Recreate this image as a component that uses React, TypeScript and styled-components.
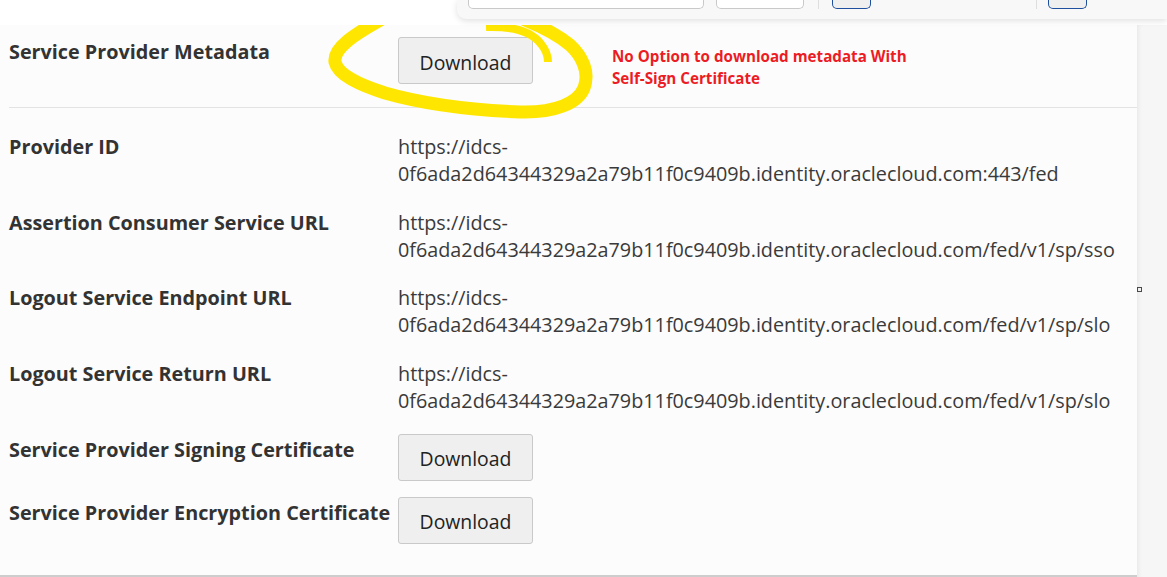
import React from 'react'
import styled, { createGlobalStyle } from 'styled-components'

const GlobalStyle = createGlobalStyle`
  html, body { margin: 0; padding: 0; background: #fff; }
  body { font-family: "Open Sans", "Noto Sans", sans-serif; color: #333; }
`

const Page = styled.div`
  width: 1167px;
  height: 577px;
  overflow: hidden;
  display: flex;
  flex-direction: column;
`

const Header = styled.header`
  position: relative;
  z-index: 3;
  height: 25px;
  flex: none;
  background: #fff;
`

const Toolbar = styled.div`
  position: absolute;
  top: 0;
  right: 0;
  left: 457px;
  height: 19px;
  display: flex;
  align-items: flex-start;
  background: #f8f8f8;
  border-bottom-left-radius: 9px;
  box-shadow: 0 2px 6px rgba(0, 0, 0, 0.12);
`

const ToolInput = styled.div<{ $w: number; $ml: number }>`
  width: ${p => p.$w}px;
  margin-left: ${p => p.$ml}px;
  height: 9px;
  box-sizing: border-box;
  background: #fff;
  border: 1px solid #c9c9c9;
  border-top: none;
  border-radius: 0 0 5px 5px;
`

const ToolSep = styled.div<{ $ml: number }>`
  width: 1px;
  height: 9px;
  margin-left: ${p => p.$ml}px;
  background: #dedede;
`

const ToolButton = styled.div<{ $ml: number }>`
  width: 39px;
  height: 9px;
  margin-left: ${p => p.$ml}px;
  box-sizing: border-box;
  background: #efefef;
  border: 1px solid #1d4f9e;
  border-top: none;
  border-radius: 0 0 5px 5px;
`

const Body = styled.div`
  flex: 1;
  display: grid;
  grid-template-columns: 1137px 30px;
`

const Panel = styled.main`
  position: relative;
  background: #fcfcfc;
  padding-left: 9px;
  border-bottom: 2px solid #cdcdcd;
`

const Gutter = styled.aside`
  background: #f6f6f6;
  box-shadow: inset 5px 0 5px -4px rgba(0, 0, 0, 0.07);
  display: flex;
  flex-direction: column;
`

const Handle = styled.span`
  width: 5px;
  height: 5px;
  margin-top: 262px;
  box-sizing: border-box;
  border: 1.5px solid #4a4a4a;
`

const MetaRow = styled.section`
  display: grid;
  grid-template-columns: 389px 1fr;
  align-items: start;
  padding: 12px 0 23px;
  border-bottom: 1px solid #e3e3e3;
`

const List = styled.div`
  padding-top: 25px;
`

const Row = styled.div<{ $space: number }>`
  display: grid;
  grid-template-columns: 389px 1fr;
  align-items: start;
  margin-bottom: ${p => p.$space}px;
`

const Label = styled.div<{ $top?: number }>`
  font-weight: 700;
  font-size: 19.8px;
  line-height: 27px;
  color: #333;
  padding-top: ${p => p.$top ?? 0}px;
  white-space: nowrap;
`

const Value = styled.div`
  font-weight: 400;
  font-size: 19.8px;
  line-height: 27px;
  color: #3a3a3a;
  max-width: 730px;
`

const DownloadButton = styled.button`
  width: 135px;
  height: 47px;
  padding: 3px 0 0;
  box-sizing: border-box;
  background: #efefef;
  border: 1px solid #c9c9c9;
  border-radius: 3px;
  font-family: "Open Sans", "Noto Sans", sans-serif;
  font-size: 19.4px;
  font-weight: 400;
  color: #222;
`

const Note = styled.p`
  position: absolute;
  left: 612px;
  top: 20px;
  margin: 0;
  font-size: 15.2px;
  line-height: 22px;
  font-weight: 700;
  color: #ec1c24;
  z-index: 2;
`

const Scribble = styled.svg`
  position: absolute;
  left: 320px;
  top: -30px;
  width: 290px;
  height: 160px;
  pointer-events: none;
  z-index: 1;
`

const urls = [
  { label: 'Provider ID', value: 'https://idcs-0f6ada2d64344329a2a79b11f0c9409b.identity.oraclecloud.com:443/fed', space: 21.5 },
  { label: 'Assertion Consumer Service URL', value: 'https://idcs-0f6ada2d64344329a2a79b11f0c9409b.identity.oraclecloud.com/fed/v1/sp/sso', space: 21.5 },
  { label: 'Logout Service Endpoint URL', value: 'https://idcs-0f6ada2d64344329a2a79b11f0c9409b.identity.oraclecloud.com/fed/v1/sp/slo', space: 21.5 },
  { label: 'Logout Service Return URL', value: 'https://idcs-0f6ada2d64344329a2a79b11f0c9409b.identity.oraclecloud.com/fed/v1/sp/slo', space: 20 },
]

const certs = [
  { label: 'Service Provider Signing Certificate', space: 16 },
  { label: 'Service Provider Encryption Certificate', space: 0 },
]

export default function App() {
  return (
    <Page>
      <GlobalStyle />
      <Header>
        <Toolbar>
          <ToolInput $w={236} $ml={11} />
          <ToolInput $w={88} $ml={12} />
          <ToolSep $ml={14} />
          <ToolButton $ml={13} />
          <ToolSep $ml={165} />
          <ToolButton $ml={11} />
        </Toolbar>
      </Header>
      <Body>
        <Panel>
          <Scribble viewBox='320 -5 290 160'>
            <path
              d='M 382 19 C 355 34, 333 48, 335 62 C 338 75, 360 85, 385 93 C 420 103, 470 110, 520 112 C 555 113, 578 103, 584 88 C 590 72, 582 56, 570 45 C 558 35, 545 28, 525 20'
              fill='none' stroke='#ffe600' strokeWidth='13' strokeLinecap='round' strokeLinejoin='round'
            />
            <path
              d='M 486 27 C 514 26, 532 32, 541 44 C 546 50, 548 56, 548 62'
              fill='none' stroke='#ffe600' strokeWidth='8' strokeLinecap='butt'
            />
          </Scribble>
          <Note>
            No Option to download metadata With<br />
            Self-Sign Certificate
          </Note>
          <MetaRow>
            <Label $top={1}>Service Provider Metadata</Label>
            <div><DownloadButton>Download</DownloadButton></div>
          </MetaRow>
          <List>
            {urls.map(u => (
              <Row key={u.label} $space={u.space}>
                <Label>{u.label}</Label>
                <Value>{u.value}</Value>
              </Row>
            ))}
            {certs.map(c => (
              <Row key={c.label} $space={c.space}>
                <Label $top={2}>{c.label}</Label>
                <div><DownloadButton>Download</DownloadButton></div>
              </Row>
            ))}
          </List>
        </Panel>
        <Gutter>
          <Handle />
        </Gutter>
      </Body>
    </Page>
  )
}
